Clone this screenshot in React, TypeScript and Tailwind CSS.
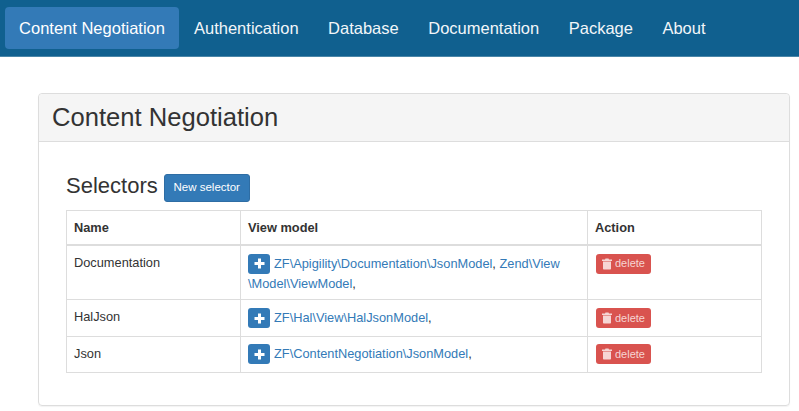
const navItems = ["Authentication", "Database", "Documentation", "Package", "About"];

const rows = [
  {
    name: "Documentation",
    models: (
      <>
        <a className="text-[#337ab7]">ZF\Apigility\Documentation\JsonModel</a>,{" "}
        <a className="text-[#337ab7]">Zend\View<br />\Model\ViewModel</a>,
      </>
    ),
    rowClass: "h-[55px]",
    padClass: "pt-[8px]",
  },
  {
    name: "HalJson",
    models: (
      <>
        <a className="text-[#337ab7]">ZF\Hal\View\HalJsonModel</a>,
      </>
    ),
    rowClass: "h-[37px]",
    padClass: "pt-[8px]",
  },
  {
    name: "Json",
    models: (
      <>
        <a className="text-[#337ab7]">ZF\ContentNegotiation\JsonModel</a>,
      </>
    ),
    rowClass: "h-[36px]",
    padClass: "pt-[7px]",
  },
];

function PlusIcon() {
  return (
    <svg width="11" height="11" viewBox="0 0 11 11" fill="#fff">
      <path d="M4 0.5h3v3.5h3.5v3h-3.5v3.5h-3v-3.5h-3.5v-3h3.5z" />
    </svg>
  );
}

function TrashIcon() {
  return (
    <svg width="10" height="12" viewBox="0 0 10 12" fill="#f6d5d4">
      <path d="M3.5 0.5h3l0.5 1h3v1.5h-10v-1.5h3z" />
      <path d="M1 3.6h8v7.2a0.8 0.8 0 0 1-0.8 0.8h-6.4a0.8 0.8 0 0 1-0.8-0.8z" />
    </svg>
  );
}

export default function App() {
  return (
    <div className="w-[799px] h-[411px] overflow-hidden bg-white text-[#333] font-['Liberation_Sans',Arial,sans-serif]">
      {/* Navbar */}
      <nav className="h-[57px] bg-[#10608f] border-b border-[#4a86a8] flex items-start pl-[5px] pt-[7px] text-[16.5px] text-[#f2f6f9]">
        <a className="h-[42px] w-[174px] flex items-center justify-center rounded bg-[#337ab7] text-white">
          Content Negotiation
        </a>
        <div className="flex h-[42px] items-center ml-[15px] gap-[29.5px]">
          {navItems.map((item) => (
            <a key={item}>{item}</a>
          ))}
        </div>
      </nav>

      {/* Panel */}
      <div className="mt-[36px] ml-[38px] w-[752px] h-[313px] rounded border border-[#ddd] shadow-[0_1px_1px_rgba(0,0,0,0.05)]">
        <div className="h-[48px] bg-[#f5f5f5] border-b border-[#ddd] rounded-t flex items-center pl-[13px] text-[25.6px]">
          Content Negotiation
        </div>
        <div className="pl-[27px] pt-[27px]">
          <div className="flex items-start h-[41px]">
            <h3 className="text-[22px] leading-[28px] mt-[3px]">Selectors</h3>
            <button className="ml-[6px] mt-[5px] h-[28px] w-[86px] rounded-[3px] bg-[#337ab7] border border-[#2e6da4] text-white text-[11.5px]">
              New selector
            </button>
          </div>
          <table className="w-[695px] table-fixed border-collapse text-[12.8px]">
            <colgroup>
              <col className="w-[174px]" />
              <col className="w-[347px]" />
              <col className="w-[174px]" />
            </colgroup>
            <thead>
              <tr className="h-[34px] font-bold">
                <th className="border border-[#ddd] border-b-2 pl-[7px] text-left">Name</th>
                <th className="border border-[#ddd] border-b-2 pl-[7px] text-left">View model</th>
                <th className="border border-[#ddd] border-b-2 pl-[7px] text-left">Action</th>
              </tr>
            </thead>
            <tbody>
              {rows.map((row) => (
                <tr key={row.name} className={row.rowClass}>
                  <td className="border border-[#ddd] pl-[7px] pt-[7px] align-top">{row.name}</td>
                  <td className={`border border-[#ddd] pl-[7px] align-top leading-[20px] ${row.padClass}`}>
                    <span className="inline-flex align-top items-center justify-center mr-[4px] w-[22px] h-[20px] rounded-[3px] bg-[#337ab7]">
                      <PlusIcon />
                    </span>
                    {row.models}
                  </td>
                  <td className={`border border-[#ddd] pl-[8px] align-top ${row.padClass}`}>
                    <button className="w-[55px] h-[20px] rounded-[3px] bg-[#d9534f] text-[#f6d5d4] text-[11px] flex items-center justify-center gap-[3px]">
                      <TrashIcon />
                      delete
                    </button>
                  </td>
                </tr>
              ))}
            </tbody>
          </table>
        </div>
      </div>
    </div>
  );
}
